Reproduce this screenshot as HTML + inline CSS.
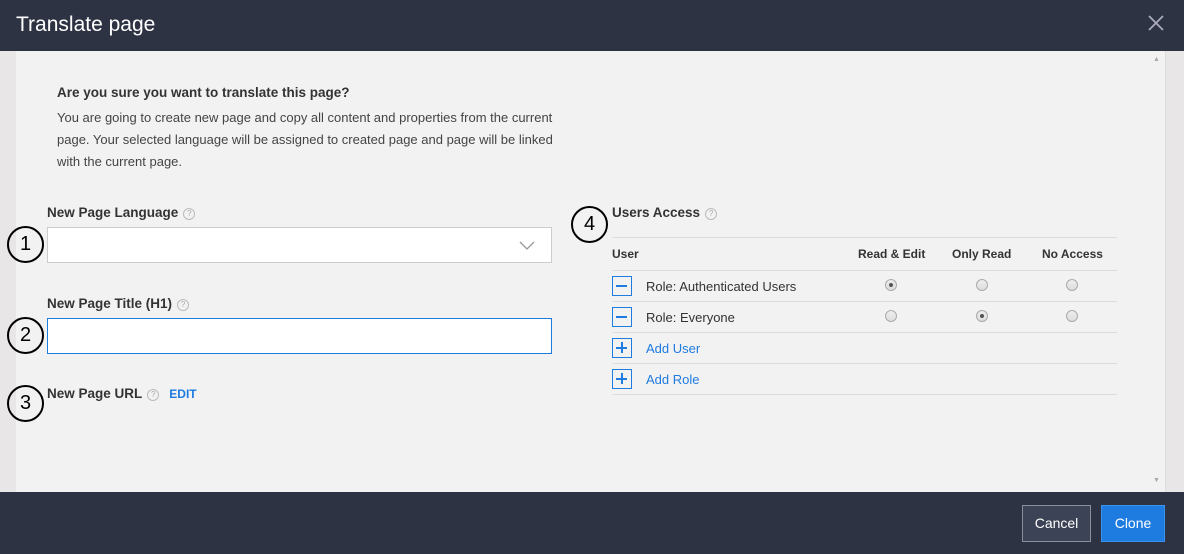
<!DOCTYPE html>
<html><head><meta charset="utf-8"><style>
*{box-sizing:border-box;margin:0;padding:0}
body{width:1184px;height:554px;overflow:hidden;font-family:"Liberation Sans","DejaVu Sans",sans-serif;background:#e8e6e6;position:relative;color:#333}
.hdr{position:absolute;left:0;top:0;width:1184px;height:51px;background:#2e3344;color:#fff;font-size:21px;padding:13px 16px}
.x{position:absolute;right:18px;top:13px;width:20px;height:20px}
.main{position:absolute;left:16px;top:51px;width:1150px;height:441px;background:#f2f2f2;border-right:1px solid #ddd}
.ftr{position:absolute;left:0;top:492px;width:1184px;height:62px;background:#2e3344}
.btn{position:absolute;top:13px;height:37px;font-size:14px;color:#fff;text-align:center;line-height:35px}
.a{position:absolute}
.lbl{position:absolute;font-size:13.5px;font-weight:bold;color:#333}
.q{display:inline-block;width:12px;height:12px;border:1px solid #bbb;border-radius:50%;font-size:8px;color:#aaa;text-align:center;line-height:10px;vertical-align:1px;margin-left:5px;font-weight:normal}
.num{position:absolute;width:37px;height:37px;border:2px solid #000;border-radius:50%;font-size:20px;text-align:center;line-height:33px;color:#000;background:transparent}
.inp{position:absolute;background:#fff}
.line{position:absolute;left:612px;width:505px;height:1px;background:#ddd}
.th{position:absolute;top:247px;font-size:12px;font-weight:bold}
.sq{position:absolute;left:612px;width:20px;height:20px;border:1.5px solid #1e7be0}
.sq::before{content:"";position:absolute;left:3px;top:7.5px;width:11px;height:2px;background:#1e7be0}
.sq.p::after{content:"";position:absolute;left:7.5px;top:3px;width:2px;height:11px;background:#1e7be0}
.rt{position:absolute;left:646px;font-size:13px}
.r{position:absolute;width:12px;height:12px;border-radius:50%;border:1px solid #aaa;background:linear-gradient(#eee,#ddd)}
.r.on::after{content:"";position:absolute;left:3px;top:3px;width:4px;height:4px;border-radius:50%;background:#555}
</style></head><body>
<div class="hdr">Translate page
<svg class="x" viewBox="0 0 20 20"><path d="M3 3L17 17M17 3L3 17" stroke="#aab" stroke-width="1.8"/></svg></div>
<div class="main"></div>
<div class="a" style="left:1153px;top:56px;font-size:7px;color:#aaa">▲</div>
<div class="a" style="left:1153px;top:477px;font-size:7px;color:#aaa">▼</div>
<div class="lbl" style="left:57px;top:85px;font-size:13.5px">Are you sure you want to translate this page?</div>
<div class="a" style="left:57px;top:107px;font-size:13px;line-height:22px;width:560px;color:#444;white-space:nowrap">You are going to create new page and copy all content and properties from the current<br>page. Your selected language will be assigned to created page and page will be linked<br>with the current page.</div>
<div class="lbl" style="left:47px;top:205px">New Page Language<span class="q">?</span></div>
<div class="inp" style="left:47px;top:227px;width:505px;height:36px;border:1px solid #ccc"><svg style="position:absolute;right:16px;top:13px" width="16" height="9"><path d="M1 1L8 8L15 1" stroke="#999" fill="none" stroke-width="1.3"/></svg></div>
<div class="lbl" style="left:47px;top:296px">New Page Title (H1)<span class="q">?</span></div>
<div class="inp" style="left:47px;top:318px;width:505px;height:36px;border:1px solid #1e7be0"></div>
<div class="lbl" style="left:47px;top:386px">New Page URL<span class="q">?</span><span style="color:#1e7be0;font-size:12px;margin-left:10px">EDIT</span></div>
<div class="num" style="left:7px;top:226px">1</div>
<div class="num" style="left:7px;top:317px">2</div>
<div class="num" style="left:7px;top:385px">3</div>
<div class="num" style="left:571px;top:206px">4</div>
<div class="lbl" style="left:612px;top:205px">Users Access<span class="q">?</span></div>
<div class="line" style="top:237px"></div>
<div class="th" style="left:612px">User</div>
<div class="th" style="left:858px">Read &amp; Edit</div>
<div class="th" style="left:952px">Only Read</div>
<div class="th" style="left:1042px">No Access</div>
<div class="line" style="top:270px"></div>
<div class="sq" style="top:276px"></div><div class="rt" style="top:279px">Role: Authenticated Users</div>
<div class="r on" style="left:885px;top:279px"></div><div class="r" style="left:976px;top:279px"></div><div class="r" style="left:1066px;top:279px"></div>
<div class="line" style="top:301px"></div>
<div class="sq" style="top:307px"></div><div class="rt" style="top:310px">Role: Everyone</div>
<div class="r" style="left:885px;top:310px"></div><div class="r on" style="left:976px;top:310px"></div><div class="r" style="left:1066px;top:310px"></div>
<div class="line" style="top:332px"></div>
<div class="sq p" style="top:338px"></div><div class="rt" style="top:341px;color:#1e7be0">Add User</div>
<div class="line" style="top:363px"></div>
<div class="sq p" style="top:369px"></div><div class="rt" style="top:372px;color:#1e7be0">Add Role</div>
<div class="line" style="top:394px"></div>
<div class="ftr">
<div class="btn" style="left:1022px;width:69px;background:#3d4356;border:1px solid #8a8f9c">Cancel</div>
<div class="btn" style="left:1101px;width:64px;background:#1e7be0;border:1px solid #3b93f0">Clone</div>
</div>
</body></html>
